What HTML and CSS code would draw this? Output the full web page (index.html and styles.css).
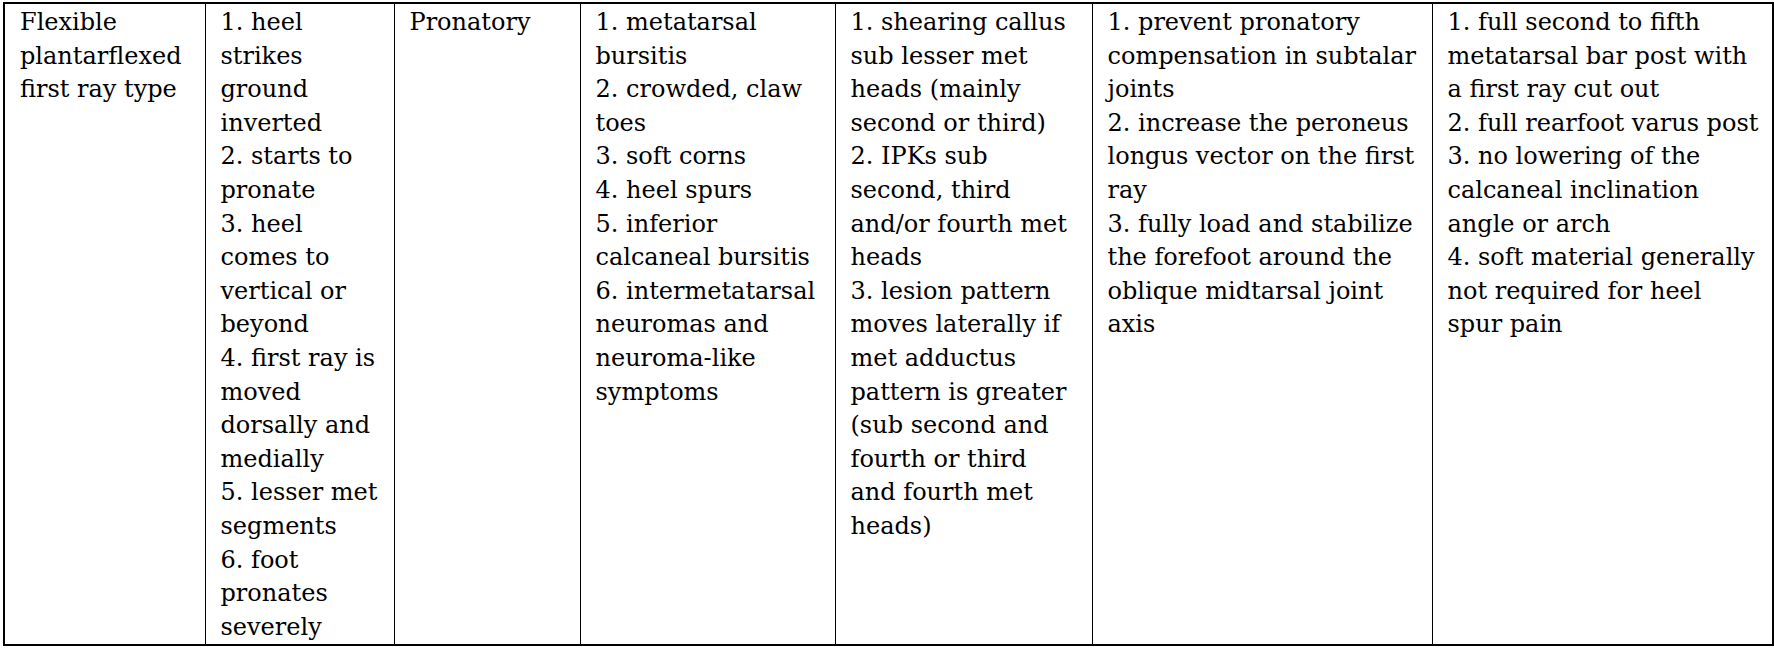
FILE: index.html
```html
<!DOCTYPE html>
<html lang="en">
<head>
<meta charset="utf-8">
<title>Flexible plantarflexed first ray type</title>
<link rel="stylesheet" href="styles.css">
</head>
<body>
<table class="grid">
  <colgroup>
    <col class="c1"><col class="c2"><col class="c3"><col class="c4"><col class="c5"><col class="c6"><col class="c7">
  </colgroup>
  <tr>
    <td>Flexible<br>plantarflexed<br>first ray type</td>
    <td>
      <div class="item">1. heel<br>strikes<br>ground<br>inverted</div>
      <div class="item">2. starts to<br>pronate</div>
      <div class="item">3. heel<br>comes to<br>vertical or<br>beyond</div>
      <div class="item">4. first ray is<br>moved<br>dorsally and<br>medially</div>
      <div class="item">5. lesser met<br>segments</div>
      <div class="item">6. foot<br>pronates<br>severely</div>
    </td>
    <td>Pronatory</td>
    <td>
      <div class="item">1. metatarsal<br>bursitis</div>
      <div class="item">2. crowded, claw<br>toes</div>
      <div class="item">3. soft corns</div>
      <div class="item">4. heel spurs</div>
      <div class="item">5. inferior<br>calcaneal bursitis</div>
      <div class="item">6. intermetatarsal<br>neuromas and<br>neuroma-like<br>symptoms</div>
    </td>
    <td>
      <div class="item">1. shearing callus<br>sub lesser met<br>heads (mainly<br>second or third)</div>
      <div class="item">2. IPKs sub<br>second, third<br>and/or fourth met<br>heads</div>
      <div class="item">3. lesion pattern<br>moves laterally if<br>met adductus<br>pattern is greater<br>(sub second and<br>fourth or third<br>and fourth met<br>heads)</div>
    </td>
    <td>
      <div class="item">1. prevent pronatory<br>compensation in subtalar<br>joints</div>
      <div class="item">2. increase the peroneus<br>longus vector on the first<br>ray</div>
      <div class="item">3. fully load and stabilize<br>the forefoot around the<br>oblique midtarsal joint<br>axis</div>
    </td>
    <td>
      <div class="item">1. full second to fifth<br>metatarsal bar post with<br>a first ray cut out</div>
      <div class="item">2. full rearfoot varus post</div>
      <div class="item">3. no lowering of the<br>calcaneal inclination<br>angle or arch</div>
      <div class="item">4. soft material generally<br>not required for heel<br>spur pain</div>
    </td>
  </tr>
</table>
</body>
</html>
```

FILE: styles.css
```css
html, body {
  margin: 0;
  padding: 0;
  background: #ffffff;
}

body {
  padding: 2px 0 0 3px;
  font-family: "DejaVu Serif", "Liberation Serif", serif;
  color: #000000;
}

.grid {
  border-collapse: collapse;
  table-layout: fixed;
  width: 1769px;
  border: 2px solid #000000;
}

.c1 { width: 201px; }
.c2 { width: 189px; }
.c3 { width: 186px; }
.c4 { width: 255px; }
.c5 { width: 257px; }
.c6 { width: 340px; }
.c7 { width: 341px; }

.grid td {
  border: 1px solid #000000;
  vertical-align: top;
  padding: 2px 4px 0 15px;
  font-size: 24px;
  line-height: 33.6px;
  white-space: nowrap;
  overflow: hidden;
}
```
